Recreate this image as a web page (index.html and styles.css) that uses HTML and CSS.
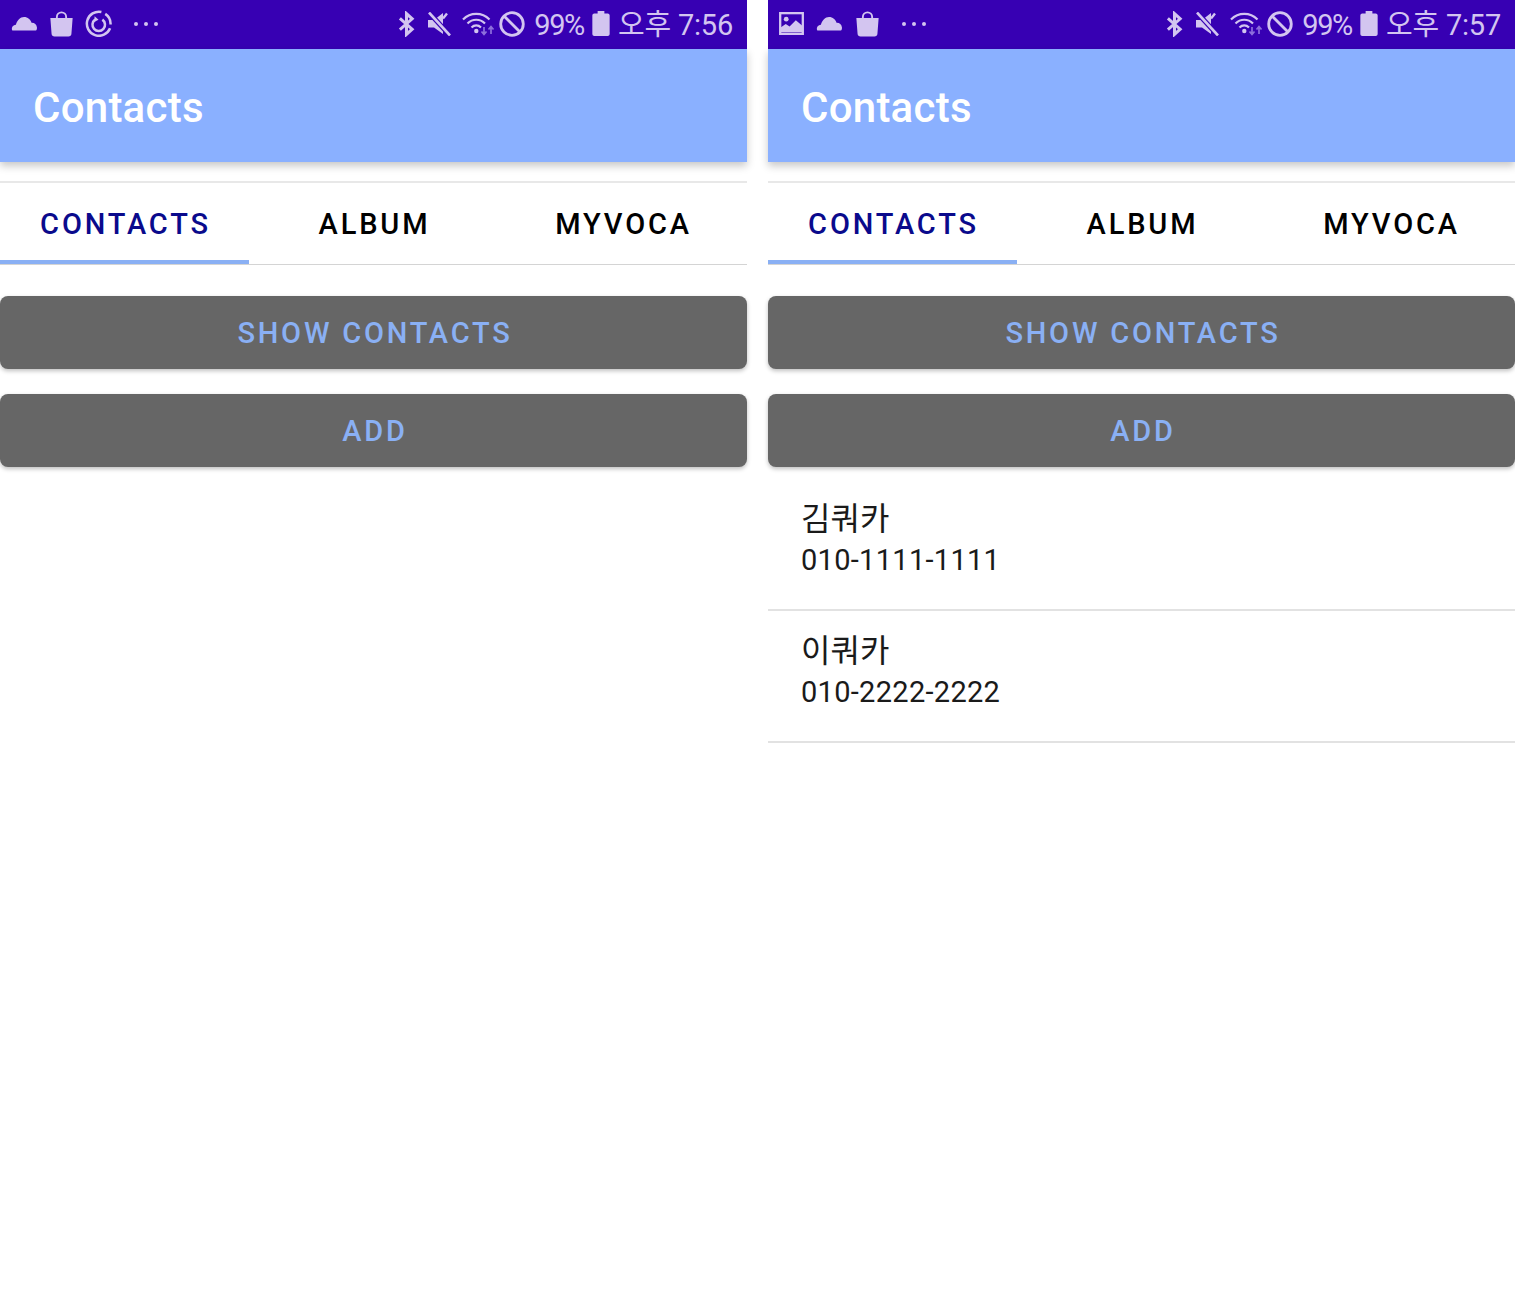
FILE: index.html
```html
<!DOCTYPE html>
<html lang="ko">
<head>
    <meta charset="UTF-8">
    <meta name="viewport" content="width=device-width, initial-scale=1.0">
    <title>Contacts</title>
    <link rel="stylesheet" href="styles.css">
</head>
<body>
    <svg class="defs" width="0" height="0">
        <symbol id="i-cloud" viewBox="0 0 28 16">
            <path d="M1 15.500c-1.400-2.600.4-6 3.800-6.200C6 4.800 9.500 1 13.500 1c4 0 7 2.600 8 6.200 3-.2 5.500 2 5.800 5 .1 1.600-.3 3.300-1.300 3.300z" fill="currentColor"/>
        </symbol>
        <symbol id="i-bag" viewBox="0 0 26 28">
            <path d="M8 8V6.500a5 5 0 0 1 10 0V8" fill="none" stroke="currentColor" stroke-width="2"/>
            <path d="M1 7.500h24l-1.300 17c-.1 1.800-1.400 3-3.200 3H5.500c-1.800 0-3.100-1.200-3.200-3z" fill="currentColor"/>
        </symbol>
        <symbol id="i-sync" viewBox="0 0 28 28">
            <path d="M17 2a12.500 12.500 0 1 0 9 17" fill="none" stroke="currentColor" stroke-width="2.600"/>
            <path d="M21 4a12.500 12.500 0 0 1 5.500 11" fill="none" stroke="currentColor" stroke-width="2.600"/>
            <path d="M10.500 10a6.500 6.500 0 1 0 7.500 0" fill="none" stroke="currentColor" stroke-width="2.600"/>
            <path d="M10 6.500l4 3.500-4.500 2.500z" fill="currentColor"/>
        </symbol>
        <symbol id="i-image" viewBox="0 0 26 24">
            <rect x="1.200" y="1.200" width="23.600" height="21.600" fill="none" stroke="currentColor" stroke-width="2.400"/>
            <circle cx="7.500" cy="7.500" r="2.500" fill="currentColor"/>
            <path d="M2 21v-5l5-3.500 4 2.500 6.500-6.500L24 14v7z" fill="currentColor"/>
        </symbol>
        <symbol id="i-bt" viewBox="0 0 18 26">
            <path d="M2 7l13 11.500L9 24V2l6 5.500L2 19" fill="none" stroke="currentColor" stroke-width="3.200"/>
        </symbol>
        <symbol id="i-mute" viewBox="0 0 24 24">
            <path d="M1 8h6l9-7v21l-9-6.500H1z" fill="currentColor"/>
            <path d="M20 1.500l-4 5" stroke="currentColor" stroke-width="2.400"/>
            <path d="M2 .5l21 23" stroke="#3700b3" stroke-width="5"/>
            <path d="M2 .5l21 23" stroke="currentColor" stroke-width="2.600"/>
        </symbol>
        <symbol id="i-wifi" viewBox="0 0 34 24">
            <path d="M1 7.500c7.500-7.500 19-7.500 26.500 0M5.500 11.500c5-5 12.500-5 17.500 0M9.500 15.500c2.800-2.800 6.700-2.800 9.500 0" fill="none" stroke="currentColor" stroke-width="2.200"/>
            <circle cx="14.300" cy="19" r="2.200" fill="currentColor"/>
            <path d="M22 15v7M19.500 19.500l2.500 3 2.500-3M29 22v-7M26.500 17.500l2.500-3 2.500 3" fill="none" stroke="#8d6fdc" stroke-width="1.700"/>
        </symbol>
        <symbol id="i-block" viewBox="0 0 26 26">
            <circle cx="13" cy="13" r="11.300" fill="none" stroke="currentColor" stroke-width="2.800"/>
            <path d="M5 5l16 16" stroke="currentColor" stroke-width="2.800"/>
        </symbol>
        <symbol id="i-battery" viewBox="0 0 18 26">
            <path d="M5.500 0h7v2.500H16c1 0 2 .8 2 2V24c0 1.200-1 2-2 2H2c-1 0-2-.8-2-2V4.500c0-1.200 1-2 2-2h3.500z" fill="currentColor"/>
        </symbol>
    </svg>

    <div class="screens">
        <section class="phone">
            <div class="status-bar">
                <div class="status-left">
                    <svg class="icon cloud"><use href="#i-cloud"/></svg>
                    <svg class="icon bag"><use href="#i-bag"/></svg>
                    <svg class="icon sync"><use href="#i-sync"/></svg>
                    <span class="more"><i></i><i></i><i></i></span>
                </div>
                <div class="status-right">
                    <svg class="icon bt"><use href="#i-bt"/></svg>
                    <svg class="icon mute"><use href="#i-mute"/></svg>
                    <svg class="icon wifi"><use href="#i-wifi"/></svg>
                    <svg class="icon block"><use href="#i-block"/></svg>
                    <span class="pct">99%</span>
                    <svg class="icon battery"><use href="#i-battery"/></svg>
                    <span class="clock">오후 7:56</span>
                </div>
            </div>
            <header class="app-bar">Contacts</header>
            <nav class="tabs">
                <div class="tab active">CONTACTS</div>
                <div class="tab">ALBUM</div>
                <div class="tab">MYVOCA</div>
            </nav>
            <div class="actions">
                <button class="btn">SHOW CONTACTS</button>
                <button class="btn">ADD</button>
            </div>
        </section>

        <section class="phone">
            <div class="status-bar">
                <div class="status-left">
                    <svg class="icon image"><use href="#i-image"/></svg>
                    <svg class="icon cloud"><use href="#i-cloud"/></svg>
                    <svg class="icon bag last"><use href="#i-bag"/></svg>
                    <span class="more"><i></i><i></i><i></i></span>
                </div>
                <div class="status-right">
                    <svg class="icon bt"><use href="#i-bt"/></svg>
                    <svg class="icon mute"><use href="#i-mute"/></svg>
                    <svg class="icon wifi"><use href="#i-wifi"/></svg>
                    <svg class="icon block"><use href="#i-block"/></svg>
                    <span class="pct">99%</span>
                    <svg class="icon battery"><use href="#i-battery"/></svg>
                    <span class="clock">오후 7:57</span>
                </div>
            </div>
            <header class="app-bar">Contacts</header>
            <nav class="tabs">
                <div class="tab active">CONTACTS</div>
                <div class="tab">ALBUM</div>
                <div class="tab">MYVOCA</div>
            </nav>
            <div class="actions">
                <button class="btn">SHOW CONTACTS</button>
                <button class="btn">ADD</button>
            </div>
            <ul class="contact-list">
                <li class="contact">
                    <div class="name">김쿼카</div>
                    <div class="phone-no">010-1111-1111</div>
                </li>
                <li class="contact">
                    <div class="name">이쿼카</div>
                    <div class="phone-no">010-2222-2222</div>
                </li>
            </ul>
        </section>
    </div>
</body>
</html>
```

FILE: styles.css
```css
* {
    box-sizing: border-box;
}
body {
    margin: 0;
    background-color: #fff;
    font-family: Roboto, "Noto Sans CJK KR", sans-serif;
}
.defs {
    display: block;
    height: 0;
}
.screens {
    display: grid;
    grid-template-columns: 747px 747px;
    column-gap: 21px;
    min-height: 1299px;
}
.status-bar {
    display: flex;
    justify-content: space-between;
    align-items: center;
    height: 49px;
    padding: 0 14px 2px 11px;
    background-color: #3700b3;
    color: #d3c5f0;
}
.status-left, .status-right {
    display: flex;
    align-items: center;
}
.icon {
    display: block;
    flex: none;
}
.cloud { width: 27px; height: 15px; margin-right: 11px; }
.image + .cloud { margin-right: 12px; }
.bag { width: 25px; height: 26px; margin-right: 11px; }
.bag.last { margin-right: 20px; }
.sync { width: 27px; height: 27px; margin-right: 20px; }
.image { width: 25px; height: 23px; margin-right: 12px; }
.more {
    display: flex;
    gap: 6px;
    margin-left: 2px;
}
.more i {
    width: 4px;
    height: 4px;
    border-radius: 50%;
    background-color: currentColor;
}
.bt { width: 17px; height: 26px; margin-right: 12px; }
.mute { width: 24px; height: 24px; margin-right: 11px; }
.wifi { width: 34px; height: 24px; margin-right: 3px; }
.block { width: 26px; height: 26px; margin-right: 9px; }
.battery { width: 18px; height: 25px; margin: 0 8px; }
.pct, .clock {
    padding-top: 2px;
    font-size: 29px;
    line-height: 34px;
}
.pct {
    letter-spacing: -1.4px;
}
.clock {
    letter-spacing: -0.2px;
}
.app-bar {
    display: flex;
    align-items: center;
    height: 113px;
    padding: 4px 0 0 33px;
    background-color: #8ab0ff;
    color: #fff;
    font-size: 42px;
    font-weight: 500;
    letter-spacing: 0.25px;
    box-shadow: 0 4px 8px rgba(0, 0, 0, 0.22);
    position: relative;
}
.tabs {
    display: grid;
    grid-template-columns: repeat(3, 1fr);
    height: 84px;
    margin-top: 19px;
    border-top: 2px solid #e8e8e8;
    border-bottom: 1px solid #d4d4d4;
}
.tab {
    display: flex;
    justify-content: center;
    align-items: center;
    height: 81px;
    padding-left: 2px;
    color: #000;
    font-size: 29px;
    font-weight: 500;
    letter-spacing: 2.85px;
}
.tab.active {
    padding-top: 4px;
    color: #0a0a8c;
    border-bottom: 4px solid #8ab0f4;
}
.actions {
    display: flex;
    flex-direction: column;
    gap: 25px;
    margin-top: 31px;
}
.btn {
    height: 73px;
    border: none;
    border-radius: 8px;
    padding: 0 0 0 3px;
    background-color: #666;
    color: #8ab0f4;
    font-family: inherit;
    font-size: 29px;
    font-weight: 500;
    letter-spacing: 2.8px;
    box-shadow: 0 2px 4px rgba(0, 0, 0, 0.25);
}
.btn:first-child {
    padding-top: 1px;
}
.contact-list {
    list-style: none;
    margin: 12px 0 0;
    padding: 0;
}
.contact {
    height: 132px;
    padding: 18px 0 0 33px;
    border-bottom: 2px solid #e2e2e2;
    color: #1a1a1a;
}
.name {
    font-size: 32px;
    line-height: 44px;
}
.phone-no {
    font-size: 29px;
    line-height: 38px;
    letter-spacing: 0.3px;
}
```
